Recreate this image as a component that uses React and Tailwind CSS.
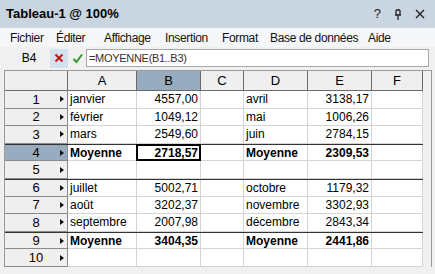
import React from 'react'

const COLS = [
  { name: 'A', w: 69 },
  { name: 'B', w: 64 },
  { name: 'C', w: 43 },
  { name: 'D', w: 64 },
  { name: 'E', w: 64 },
  { name: 'F', w: 51 },
]

// each row: [A, B, C, D, E, F]
const ROWS = [
  { cells: ['janvier', '4557,00', '', 'avril', '3138,17', ''] },
  { cells: ['février', '1049,12', '', 'mai', '1006,26', ''] },
  { cells: ['mars', '2549,60', '', 'juin', '2784,15', ''] },
  { cells: ['Moyenne', '2718,57', '', 'Moyenne', '2309,53', ''], bold: true, top: true, sel: true },
  { cells: ['', '', '', '', '', ''] },
  { cells: ['juillet', '5002,71', '', 'octobre', '1179,32', ''], top: true },
  { cells: ['août', '3202,37', '', 'novembre', '3302,93', ''] },
  { cells: ['septembre', '2007,98', '', 'décembre', '2843,34', ''] },
  { cells: ['Moyenne', '3404,35', '', 'Moyenne', '2441,86', ''], bold: true, top: true },
  { cells: ['', '', '', '', '', ''] },
]

const MENU = [
  { t: 'Fichier', w: 46 },
  { t: 'Éditer', w: 48 },
  { t: 'Affichage', w: 61 },
  { t: 'Insertion', w: 57 },
  { t: 'Format', w: 48 },
  { t: 'Base de données', w: 98 },
  { t: 'Aide', w: 40 },
]

export default function App() {
  return (
    <div className="w-[435px] h-[274px] bg-[#f0f0f0] overflow-hidden flex flex-col text-black" style={{ fontFamily: '"Liberation Sans", Arial, sans-serif' }}>
      {/* title bar */}
      <div className="h-[28px] bg-[#c9d5e1] flex items-center px-[6px] shrink-0">
        <span className="font-bold text-[13px]">Tableau-1 @ 100%</span>
        <div className="ml-auto flex items-center gap-[12px] pr-[4px] text-[13px] text-[#222]">
          <span>?</span>
          <svg width="10" height="11" viewBox="0 0 10 11" className="mt-[1px]">
            <path d="M3 1v5M7 1v5M2 6h6M5 6v5M3 1h4" stroke="#222" strokeWidth="1.3" fill="none" />
          </svg>
          <svg width="10" height="10" viewBox="0 0 10 10">
            <path d="M1 1l8 8M9 1l-8 8" stroke="#222" strokeWidth="1.4" />
          </svg>
        </div>
      </div>

      {/* menu bar */}
      <div className="h-[19px] bg-[#f5f6f8] flex items-center pl-[10px] text-[12px] tracking-[-0.35px] text-[#111] shrink-0">
        {MENU.map(m => (
          <span key={m.t} className="shrink-0 whitespace-nowrap" style={{ width: m.w }}>{m.t}</span>
        ))}
      </div>

      {/* formula bar */}
      <div className="h-[22px] flex items-center shrink-0 bg-[#f0f0f0]">
        <span className="w-[50px] text-center text-[12px] pl-[8px]">B4</span>
        <div className="w-[18px] h-[19px] bg-[#d3e2ef] flex items-center justify-center">
          <svg width="10" height="10" viewBox="0 0 10 10"><path d="M1.5 1.5l7 7M8.5 1.5l-7 7" stroke="#c01818" strokeWidth="2" /></svg>
        </div>
        <div className="w-[18px] flex items-center justify-center">
          <svg width="11" height="11" viewBox="0 0 11 11"><path d="M1.5 6l3 3L10 1.5" stroke="#2a9a2a" strokeWidth="2" fill="none" /></svg>
        </div>
        <div className="w-[343px] h-[18px] bg-white border border-[#a8a8a8] flex items-center pl-[2px] text-[11px] tracking-[-0.3px] text-[#333]">=MOYENNE(B1..B3)</div>
      </div>

      {/* grid */}
      <div className="flex mt-[1px] ml-[4px] mr-[3px] border-l border-t border-r border-[#9a9a9a] bg-[#f0f0f0]">
        <div className="flex flex-col">
          {/* header row */}
          <div className="flex h-[20px]">
            <div className="w-[63px] bg-[#efefef] border-r border-b border-[#6b6b6b]" />
            {COLS.map(c => (
              <div key={c.name} style={{ width: c.w }}
                className={`flex items-center justify-center text-[13px] border-r border-b border-[#6b6b6b] ${c.name === 'B' ? 'bg-[#98acc0]' : 'bg-[#efefef]'}`}>
                {c.name}
              </div>
            ))}
          </div>
          {ROWS.map((r, i) => (
            <div key={i} className={`flex h-[17.6px] ${r.top ? 'border-t border-[#333]' : ''}`}>
              <div className={`w-[63px] relative flex items-center justify-center text-[13px] border-r border-b border-[#8a8a8a] ${r.sel ? 'bg-[#98acc0]' : 'bg-[#efefef]'}`}>
                {i + 1}
                <svg width="4" height="6" viewBox="0 0 4 6" className="absolute right-[3px] top-1/2 -translate-y-1/2"><path d="M0 0l4 3-4 3z" fill="#111" /></svg>
              </div>
              {r.cells.map((v, j) => {
                const num = j === 1 || j === 4
                const active = r.sel && j === 1
                return (
                  <div key={j} style={{ width: COLS[j].w }}
                    className={`relative bg-white flex items-center text-[12px] border-r border-b border-[#d4d4d4] ${num ? 'justify-end pr-[2px]' : 'pl-[2px]'} ${r.bold ? 'font-bold' : ''}`}>
                    {active && <div className="absolute inset-[-1px] border-2 border-black" />}
                    <span className="relative">{v}</span>
                  </div>
                )
              })}
            </div>
          ))}
        </div>
        <div className="flex-1 bg-[#f0f0f0]" />
      </div>
    </div>
  )
}
